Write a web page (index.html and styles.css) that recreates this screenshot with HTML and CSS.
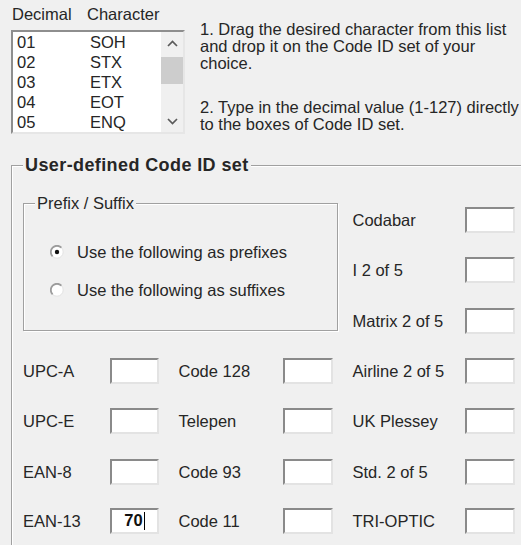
FILE: index.html
```html
<!DOCTYPE html>
<html>
<head>
<meta charset="utf-8">
<link rel="stylesheet" href="styles.css">
</head>
<body>
<div class="dialog">
  <div class="top">
    <div class="charlist">
      <div class="list-head"><span class="col-dec">Decimal</span><span class="col-chr">Character</span></div>
      <div class="listbox">
        <div class="rows">
          <div class="row"><span class="col-dec">01</span><span class="col-chr">SOH</span></div>
          <div class="row"><span class="col-dec">02</span><span class="col-chr">STX</span></div>
          <div class="row"><span class="col-dec">03</span><span class="col-chr">ETX</span></div>
          <div class="row"><span class="col-dec">04</span><span class="col-chr">EOT</span></div>
          <div class="row"><span class="col-dec">05</span><span class="col-chr">ENQ</span></div>
        </div>
        <div class="scrollbar">
          <div class="sb-btn"><svg width="11" height="7" viewBox="0 0 11 7"><polyline points="1,6 5.5,1.5 10,6" fill="none" stroke="#5a5a5a" stroke-width="1.7"/></svg></div>
          <div class="sb-track"><div class="sb-thumb"></div></div>
          <div class="sb-btn"><svg width="11" height="7" viewBox="0 0 11 7"><polyline points="1,1 5.5,5.5 10,1" fill="none" stroke="#5a5a5a" stroke-width="1.7"/></svg></div>
        </div>
      </div>
    </div>
    <div class="help">
      <p>1. Drag the desired character from this list<br>and drop it on the Code ID set of your<br>choice.</p>
      <p class="second">2. Type in the decimal value (1-127) directly<br>to the boxes of Code ID set.</p>
    </div>
  </div>

  <fieldset class="group codeset">
    <legend class="bold-legend">User-defined Code ID set</legend>
    <div class="grid">
      <fieldset class="group prefix">
        <legend>Prefix / Suffix</legend>
        <div class="radios">
          <div class="radio-row">
            <svg class="radio" width="14" height="14" viewBox="0 0 14 14"><circle cx="7" cy="7" r="6.2" fill="#fff" stroke="#e2e2e2" stroke-width="1"/><path d="M2.6 11.4 A6.2 6.2 0 0 1 11.4 2.6" fill="none" stroke="#9c9c9c" stroke-width="1.8"/><circle cx="7" cy="7" r="2.2" fill="#111"/></svg>
            <span>Use the following as prefixes</span>
          </div>
          <div class="radio-row">
            <svg class="radio" width="14" height="14" viewBox="0 0 14 14"><circle cx="7" cy="7" r="6.2" fill="#fff" stroke="#e2e2e2" stroke-width="1"/><path d="M2.6 11.4 A6.2 6.2 0 0 1 11.4 2.6" fill="none" stroke="#9c9c9c" stroke-width="1.8"/></svg>
            <span>Use the following as suffixes</span>
          </div>
        </div>
      </fieldset>

      <span class="lbl pad">Codabar</span><div class="tb"></div>
      <span class="lbl pad">I 2 of 5</span><div class="tb"></div>
      <span class="lbl pad">Matrix 2 of 5</span><div class="tb"></div>

      <span class="lbl">UPC-A</span><div class="tb"></div>
      <span class="lbl pad">Code 128</span><div class="tb"></div>
      <span class="lbl pad">Airline 2 of 5</span><div class="tb"></div>

      <span class="lbl">UPC-E</span><div class="tb"></div>
      <span class="lbl pad">Telepen</span><div class="tb"></div>
      <span class="lbl pad">UK Plessey</span><div class="tb"></div>

      <span class="lbl">EAN-8</span><div class="tb"></div>
      <span class="lbl pad">Code 93</span><div class="tb"></div>
      <span class="lbl pad">Std. 2 of 5</span><div class="tb"></div>

      <span class="lbl">EAN-13</span><div class="tb filled"><span class="val">70</span><span class="caret"></span></div>
      <span class="lbl pad">Code 11</span><div class="tb"></div>
      <span class="lbl pad">TRI-OPTIC</span><div class="tb"></div>
    </div>
  </fieldset>
</div>
</body>
</html>
```

FILE: styles.css
```css
html, body {
  margin: 0;
  padding: 0;
  background: #f0f0f0;
  overflow: hidden;
}
body {
  width: 521px;
  height: 545px;
  font-family: "Liberation Sans", Arial, sans-serif;
  font-size: 16.5px;
  color: #262626;
}
.dialog {
  width: 521px;
  height: 545px;
  overflow: hidden;
}
.top {
  display: flex;
  align-items: flex-start;
}
.charlist {
  margin-left: 11px;
  width: 174px;
}
.list-head {
  display: flex;
  height: 30px;
  padding-left: 1px;
  padding-top: 4px;
  box-sizing: border-box;
  line-height: 20px;
}
.list-head .col-dec { width: 75px; }
.listbox {
  display: flex;
  height: 104px;
  box-sizing: border-box;
  border: 2px solid;
  border-color: #8e8e8e #e6e6e6 #e6e6e6 #8e8e8e;
  background: #fff;
}
.rows {
  flex: 1;
  padding-left: 4px;
}
.row {
  display: flex;
  height: 20px;
  line-height: 20px;
}
.row .col-dec { width: 73px; }
.scrollbar {
  width: 22px;
  display: flex;
  flex-direction: column;
  background: #f0f0f0;
}
.sb-btn {
  height: 22px;
  display: flex;
  align-items: center;
  justify-content: center;
}
.sb-track {
  flex: 1;
  padding-top: 3px;
}
.sb-thumb {
  height: 27px;
  background: #cdcdcd;
}
.help {
  margin-left: 15px;
  padding-top: 21px;
  line-height: 17px;
  white-space: nowrap;
}
.help p {
  margin: 0;
}
.help p.second {
  margin-top: 27px;
}

.group {
  border: 1px solid #a0a0a0;
  box-shadow: inset 1px 1px 0 #fff, 1px 1px 0 #fff;
  min-width: 0;
}
.group legend {
  padding: 0 2px;
  line-height: 20px;
  background: #f0f0f0;
}
.codeset {
  margin: 21px 0 0 11px;
  padding: 20px 0 0 11px;
  width: 510px;
  box-sizing: border-box;
  border-right: none;
  border-bottom: none;
}
.bold-legend {
  font-weight: bold;
  font-size: 18px;
  letter-spacing: 0.4px;
}
.grid {
  display: grid;
  grid-template-columns: 87px 49px 124px 50px 132px 50px;
  grid-template-rows: repeat(6, 50.3px) 48.4px;
}
.prefix {
  grid-column: 1 / 5;
  grid-row: 1 / 4;
  margin: -2px -5px 15px 0;
  padding: 0 0 0 11px;
}
.radios {
  display: flex;
  flex-direction: column;
  gap: 18px;
  padding-top: 29px;
}
.radio-row {
  display: flex;
  align-items: center;
  line-height: 20px;
}
.radio {
  margin-left: 15px;
  margin-right: 13px;
  flex: none;
}
.lbl {
  display: flex;
  align-items: center;
  line-height: 20px;
  white-space: nowrap;
}
.lbl.pad {
  padding-left: 19.5px;
}
.tb {
  align-self: center;
  height: 26px;
  box-sizing: border-box;
  border: 2px solid;
  border-color: #8a8a8a #e3e3e3 #e3e3e3 #8a8a8a;
  background: #fff;
}
.tb.filled {
  display: flex;
  align-items: center;
  justify-content: center;
  font-weight: bold;
  color: #111;
}
.caret {
  width: 1px;
  height: 18px;
  margin-left: 1px;
  background: #000;
}
```
